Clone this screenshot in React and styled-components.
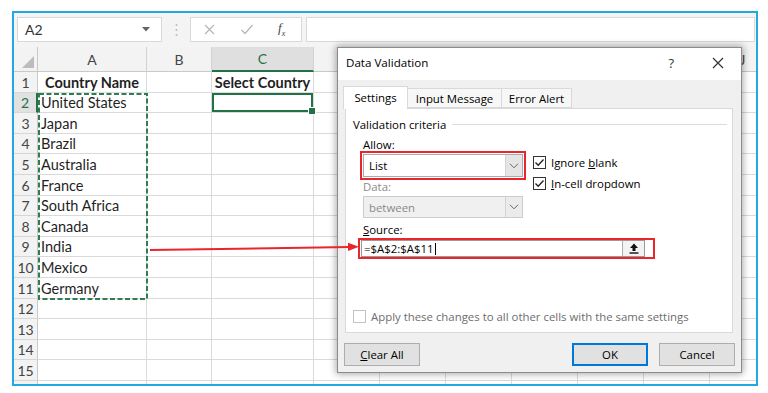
import React from "react"
import styled, { createGlobalStyle, css } from "styled-components"

const GlobalStyle = createGlobalStyle`
  * { box-sizing: border-box; }
  html, body { margin: 0; padding: 0; background: #ffffff; }
  body {
    padding: 11px 0 0 12px;
    font-family: "Lato", "Liberation Sans", sans-serif;
  }
`

const countries = [
  "United States",
  "Japan",
  "Brazil",
  "Australia",
  "France",
  "South Africa",
  "Canada",
  "India",
  "Mexico",
  "Germany",
]
const columns = ["A", "B", "C", "D", "E", "F", "G", "H", "I", "J"]
// D..I sit under the dialog, their letters never show
const hiddenHeads = ["D", "E", "F", "G", "H", "I"]
const ROWS = 16

const Frame = styled.div`
  position: relative;
  width: 746px;
  height: 375px;
  border: 2px solid #22a8e2;
  background: #f4f4f4;
  overflow: hidden;
`

/* ---------- formula bar ---------- */

const Toolbar = styled.div`
  display: flex;
  align-items: center;
  height: 34px;
  padding: 0 1px 1px 3px;
`

const NameBox = styled.div`
  display: flex;
  align-items: center;
  justify-content: space-between;
  width: 145px;
  height: 25px;
  padding: 0 11px 0 7px;
  background: #fff;
  border: 1px solid #d9d9d9;
  font-size: 14px;
  color: #333;
`

const Grip = styled.div`
  width: 28px;
  display: flex;
  justify-content: center;
`

const FxBox = styled.div`
  display: flex;
  align-items: center;
  gap: 24px;
  width: 112px;
  height: 25px;
  padding-left: 12px;
  background: #fff;
  border: 1px solid #d9d9d9;
`

const Fx = styled.span`
  font-family: "Liberation Serif", serif;
  font-style: italic;
  font-size: 13px;
  color: #444;
  line-height: 1;
`

const Formula = styled.div`
  flex: 1;
  height: 25px;
  margin-left: 4px;
  background: #fff;
  border: 1px solid #d9d9d9;
`

/* ---------- sheet ---------- */

const Sheet = styled.div`
  position: relative;
  display: grid;
  grid-template-columns: 24px 109px 65px 102px repeat(7, 66px);
  grid-template-rows: 25px repeat(${ROWS}, 20.6px);
  background: #fff;
`

const Corner = styled.div`
  position: relative;
  background: #f3f3f3;
  border-right: 1px solid #c9c9c9;
  border-bottom: 1px solid #c9c9c9;

  &::after {
    content: "";
    position: absolute;
    right: 3px;
    bottom: 3px;
    border-style: solid;
    border-width: 0 0 12px 12px;
    border-color: transparent transparent #bdbdbd transparent;
  }
`

const ColHead = styled.div`
  display: flex;
  align-items: center;
  justify-content: center;
  background: ${(p) => (p.$active ? "#dfdfdf" : "#f3f3f3")};
  color: ${(p) => (p.$active ? "#217346" : "#444")};
  border-right: 1px solid #d2d2d2;
  border-bottom: ${(p) => (p.$active ? "2px solid #217346" : "1px solid #c9c9c9")};
  font-size: 14px;
`

const RowHead = styled.div`
  display: flex;
  align-items: flex-end;
  justify-content: center;
  padding-bottom: 1px;
  background: ${(p) => (p.$active ? "#e1e1e1" : "#f3f3f3")};
  color: ${(p) => (p.$active ? "#217346" : "#444")};
  border-right: ${(p) => (p.$active ? "2px solid #217346" : "1px solid #c9c9c9")};
  border-bottom: 1px solid #d6d6d6;
  font-size: 14px;
`

const Cell = styled.div`
  position: relative;
  display: flex;
  align-items: flex-end;
  justify-content: ${(p) => (p.$center ? "center" : "flex-start")};
  padding-left: ${(p) => (p.$center ? 0 : 3)}px;
  padding-bottom: 1px;
  border-right: 1px solid #dadada;
  border-bottom: 1px solid #dadada;
  font-size: 14.5px;
  font-weight: ${(p) => (p.$bold ? 700 : 400)};
  color: #1f1f1f;
  white-space: nowrap;
  overflow: hidden;

  ${(p) =>
    p.$active &&
    css`
      overflow: visible;
      z-index: 2;
      box-shadow: inset 0 0 0 2px #217346;
      &::after {
        content: "";
        position: absolute;
        right: -3px;
        bottom: -3px;
        width: 6px;
        height: 6px;
        background: #217346;
        border: 1px solid #fff;
      }
    `}
`

const Marquee = styled.svg`
  position: absolute;
  left: 24px;
  top: 45.6px;
  width: 110px;
  height: 207px;
  z-index: 3;
  pointer-events: none;
`

/* ---------- dialog ---------- */

const Dialog = styled.div`
  position: absolute;
  left: 323px;
  top: 34px;
  width: 405px;
  height: 326px;
  display: flex;
  flex-direction: column;
  background: #f0f0f0;
  border: 1px solid #8c8c8c;
  box-shadow: 0 0 7px 1px rgba(0, 0, 0, 0.35);
  font-family: "Open Sans", "Noto Sans", sans-serif;
  font-size: 11.4px;
  color: #000;
  z-index: 5;
`

const TitleBar = styled.div`
  display: flex;
  align-items: center;
  justify-content: space-between;
  height: 32px;
  padding: 0 17px 3px 8px;
  background: #fff;
  font-size: 11.6px;
`

const TitleControls = styled.div`
  display: flex;
  align-items: center;
  gap: 38px;
  font-size: 13px;
  color: #333;
`

const Body = styled.div`
  display: flex;
  flex-direction: column;
  padding: 6px 0 6px;
`

const Tabs = styled.div`
  position: relative;
  z-index: 1;
  display: flex;
  align-items: flex-end;
  height: 22px;
  padding-left: 5px;
`

const Tab = styled.div`
  display: flex;
  align-items: center;
  justify-content: center;
  width: ${(p) => p.$w}px;
  height: ${(p) => (p.$active ? 23 : 20)}px;
  margin-bottom: ${(p) => (p.$active ? -1 : 0)}px;
  margin-left: ${(p) => (p.$first ? 0 : -1)}px;
  background: ${(p) => (p.$active ? "#fff" : "#f7f7f7")};
  border: 1px solid #d9d9d9;
  border-bottom: ${(p) => (p.$active ? "none" : "1px solid #d9d9d9")};
  padding-bottom: ${(p) => (p.$active ? 1 : 0)}px;
`

const Panel = styled.div`
  display: flex;
  flex-direction: column;
  width: 388px;
  height: 225px;
  margin-left: 7px;
  padding: 7px 5px 9px 7px;
  background: #fff;
  border: 1px solid #d9d9d9;
`

const GroupTitle = styled.div`
  display: flex;
  align-items: center;
  gap: 6px;
  height: 16px;

  &::after {
    content: "";
    flex: 1;
    height: 1px;
    background: #dcdcdc;
  }
`

const Criteria = styled.div`
  display: flex;
  flex-direction: column;
  margin-top: 6px;
  padding-left: 10px;
`

const TopRow = styled.div`
  display: flex;
  gap: 10px;
`

const LeftCol = styled.div`
  display: flex;
  flex-direction: column;
  width: 160px;
`

const RightCol = styled.div`
  display: flex;
  flex-direction: column;
  gap: 3px;
  padding-top: 15px;
`

const Label = styled.div`
  height: 14px;
  line-height: 14px;
  margin-top: ${(p) => p.$mt || 0}px;
  color: ${(p) => (p.$muted ? "#8a8a8a" : "#000")};
`

const Select = styled.div`
  display: flex;
  align-items: center;
  justify-content: space-between;
  width: 160px;
  height: ${(p) => p.$h}px;
  margin-top: 2px;
  padding-left: 5px;
  border: 1px solid ${(p) => (p.$disabled ? "#cccccc" : "#acacac")};
  background: ${(p) => (p.$disabled ? "#f0f0f0" : "#fff")};
  color: ${(p) => (p.$disabled ? "#8a8a8a" : "#000")};
  outline: ${(p) => (p.$marked ? "2px solid #e8262b" : "none")};
  outline-offset: 1px;
`

const SelectButton = styled.span`
  display: flex;
  align-items: center;
  justify-content: center;
  width: 17px;
  align-self: stretch;
  background: ${(p) => (p.$disabled ? "#ebebeb" : "#e5e5e5")};
  border-left: 1px solid #d4d4d4;
`

const CheckRow = styled.label`
  display: flex;
  align-items: center;
  gap: 5px;
  height: 18px;
  color: ${(p) => (p.$muted ? "#6d6d6d" : "#000")};
`

const Box = styled.span`
  display: flex;
  align-items: center;
  justify-content: center;
  width: 13px;
  height: 13px;
  background: #fff;
  border: 1px solid ${(p) => (p.$muted ? "#c4c4c4" : "#333")};
`

const SourceFrame = styled.div`
  display: flex;
  width: 297px;
  height: 21px;
  margin: 1px 0 0 -5px;
  padding: 0 8px 0 1px;
  border: 2px solid #e8262b;
`

const SourceInput = styled.div`
  flex: 1;
  display: flex;
  align-items: center;
  padding-left: 2px;
  background: #fff;
  border: 1px solid #9a9a9a;
`

const Caret = styled.span`
  width: 1px;
  height: 12px;
  margin-left: 1px;
  background: #000;
`

const PickButton = styled.span`
  display: flex;
  align-items: center;
  justify-content: center;
  width: 22px;
  margin-left: auto;
  align-self: stretch;
  background: #f3f3f3;
  border-left: 1px solid #adadad;
`

const ApplyRow = styled(CheckRow)`
  margin-top: auto;
  height: 14px;
`

const Buttons = styled.div`
  display: flex;
  gap: 11px;
  height: 23px;
  margin-top: 10px;
  padding: 0 6px;
`

const Button = styled.div`
  display: flex;
  align-items: center;
  justify-content: center;
  width: 76px;
  height: 23px;
  margin-right: ${(p) => (p.$push ? "auto" : 0)};
  background: #e1e1e1;
  border: ${(p) => (p.$primary ? "2px solid #0078d7" : "1px solid #adadad")};
`

const ArrowLayer = styled.svg`
  position: absolute;
  left: 0;
  top: 0;
  width: 742px;
  height: 371px;
  z-index: 6;
  pointer-events: none;
`

const Check = () => (
  <svg width="11" height="11" viewBox="0 0 11 11">
    <polyline points="1.5,5.5 4.2,8.3 9.5,2.5" fill="none" stroke="#222" strokeWidth="1.3" />
  </svg>
)

const Chevron = () => (
  <svg width="10" height="6" viewBox="0 0 10 6">
    <polyline points="1,0.8 5,4.8 9,0.8" fill="none" stroke="#666" strokeWidth="1" />
  </svg>
)

const Checkbox = ({ checked, muted, children }) => (
  <CheckRow $muted={muted}>
    <Box $muted={muted}>{checked && <Check />}</Box>
    <span>{children}</span>
  </CheckRow>
)

const FormulaBar = () => (
  <Toolbar>
    <NameBox>
      <span>A2</span>
      <svg width="8" height="5" viewBox="0 0 8 5">
        <polygon points="0,0 8,0 4,4.5" fill="#666" />
      </svg>
    </NameBox>
    <Grip>
      <svg width="3" height="14" viewBox="0 0 3 14">
        <circle cx="1.5" cy="2" r="1" fill="#bbb" />
        <circle cx="1.5" cy="7" r="1" fill="#bbb" />
        <circle cx="1.5" cy="12" r="1" fill="#bbb" />
      </svg>
    </Grip>
    <FxBox>
      <svg width="13" height="13" viewBox="0 0 13 13">
        <path d="M2 2 L11 11 M11 2 L2 11" stroke="#b5b5b5" strokeWidth="1.2" />
      </svg>
      <svg width="14" height="13" viewBox="0 0 14 13">
        <polyline points="1.5,7 5,10.5 12.5,2" fill="none" stroke="#b5b5b5" strokeWidth="1.2" />
      </svg>
      <Fx>
        f<sub style={{ fontSize: 8 }}>x</sub>
      </Fx>
    </FxBox>
    <Formula />
  </Toolbar>
)

const Grid = () => {
  const cells = [<Corner key="corner" />]
  columns.forEach((c) =>
    cells.push(
      <ColHead key={"h" + c} $active={c === "C"}>
        {hiddenHeads.includes(c) ? "" : c}
      </ColHead>
    )
  )
  for (let r = 1; r <= ROWS; r++) {
    cells.push(
      <RowHead key={"r" + r} $active={r === 2}>
        {r <= 15 ? r : ""}
      </RowHead>
    )
    columns.forEach((c) => {
      let text = ""
      let head = false
      if (r === 1 && c === "A") {
        text = "Country Name"
        head = true
      } else if (r === 1 && c === "C") {
        text = "Select Country"
        head = true
      } else if (c === "A" && r >= 2 && r <= 11) {
        text = countries[r - 2]
      }
      cells.push(
        <Cell key={c + r} $bold={head} $center={head} $active={c === "C" && r === 2}>
          {text}
        </Cell>
      )
    })
  }
  return (
    <Sheet>
      {cells}
      <Marquee viewBox="0 0 110 207">
        <rect
          x="1"
          y="1"
          width="108"
          height="205"
          fill="none"
          stroke="#2f7d50"
          strokeWidth="2"
          strokeDasharray="5 2.5"
        />
      </Marquee>
    </Sheet>
  )
}

const DataValidation = () => (
  <Dialog>
    <TitleBar>
      <span>Data Validation</span>
      <TitleControls>
        <span>?</span>
        <svg width="12" height="12" viewBox="0 0 12 12">
          <path d="M1 1 L11 11 M11 1 L1 11" stroke="#333" strokeWidth="1.2" />
        </svg>
      </TitleControls>
    </TitleBar>
    <Body>
      <Tabs>
        <Tab $w={65} $active $first>
          Settings
        </Tab>
        <Tab $w={95}>Input Message</Tab>
        <Tab $w={71}>Error Alert</Tab>
      </Tabs>
      <Panel>
        <GroupTitle>Validation criteria</GroupTitle>
        <Criteria>
          <TopRow>
            <LeftCol>
              <Label>Allow:</Label>
              <Select $h={23} $marked>
                <span>List</span>
                <SelectButton>
                  <Chevron />
                </SelectButton>
              </Select>
              <Label $muted $mt={3}>
                Data:
              </Label>
              <Select $h={22} $disabled>
                <span>between</span>
                <SelectButton $disabled>
                  <Chevron />
                </SelectButton>
              </Select>
            </LeftCol>
            <RightCol>
              <Checkbox checked>
                Ignore <u>b</u>lank
              </Checkbox>
              <Checkbox checked>
                <u>I</u>n-cell dropdown
              </Checkbox>
            </RightCol>
          </TopRow>
          <Label $mt={5}>
            <u>S</u>ource:
          </Label>
          <SourceFrame>
            <SourceInput>
              <span>=$A$2:$A$11</span>
              <Caret />
              <PickButton>
                <svg width="10" height="11" viewBox="0 0 10 11">
                  <path d="M5 0.5 L1 5 H3.5 V8 H6.5 V5 H9 Z" fill="#111" />
                  <rect x="0.5" y="9.3" width="9" height="1.4" fill="#111" />
                </svg>
              </PickButton>
            </SourceInput>
          </SourceFrame>
        </Criteria>
        <ApplyRow $muted>
          <Box $muted />
          <span>Apply these changes to all other cells with the same settings</span>
        </ApplyRow>
      </Panel>
      <Buttons>
        <Button $push>
          <span>
            <u>C</u>lear All
          </span>
        </Button>
        <Button $primary>OK</Button>
        <Button>Cancel</Button>
      </Buttons>
    </Body>
  </Dialog>
)

export default function App() {
  return (
    <>
      <GlobalStyle />
      <Frame>
        <FormulaBar />
        <Grid />
        <DataValidation />
        <ArrowLayer viewBox="0 0 742 371">
          <line x1="136" y1="237" x2="336" y2="234" stroke="#e8262b" strokeWidth="2" />
          <polygon points="345,233.8 334,229.8 334,238" fill="#e8262b" />
        </ArrowLayer>
      </Frame>
    </>
  )
}
